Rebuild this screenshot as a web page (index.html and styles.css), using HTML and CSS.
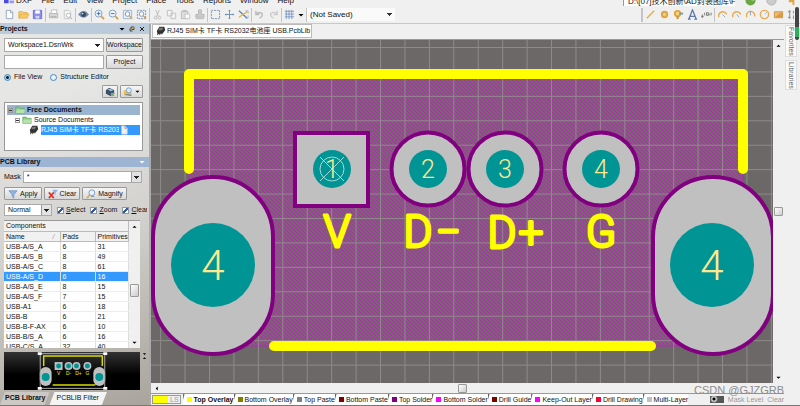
FILE: index.html
```html
<!DOCTYPE html>
<html lang="en">
<head>
	<meta charset="utf-8">
	<meta name="viewport" content="width=device-width">
	<title>USB.PcbLib</title>
	<link rel="stylesheet" href="styles.css">
</head>
<body>
	<svg class="sprite" aria-hidden="true">
		<symbol id="i-logo" viewBox="0 0 12 12"><path d="M0 0h5v9H0z" fill="#4a4ae0"/><path d="M6 6h5v3H6z" fill="#9a9af0"/></symbol>
		<symbol id="i-new" viewBox="0 0 12 12"><path d="M2.500 1.500h5l2 2v7h-7z" fill="#fff" stroke="#8fa5bd"/><path d="M7 1.500v2.500h2.500" fill="none" stroke="#8fa5bd"/></symbol>
		<symbol id="i-open" viewBox="0 0 12 12"><path d="M1 10V3h4l1 1h4v2" fill="#f5d58a" stroke="#d9a441"/><path d="M1 10l2-4.500h9L10 10z" fill="#f8c766" stroke="#e0a030" stroke-width=".6"/></symbol>
		<symbol id="i-save" viewBox="0 0 12 12"><path d="M1.500 1.500h9v9h-9z" fill="#8f8fe8" stroke="#6a6acb"/><path d="M3.500 1.500h5v3.500h-5z" fill="#fff"/><path d="M4 7.500h4v3H4z" fill="#d5d5fa"/></symbol>
		<symbol id="i-print" viewBox="0 0 12 12"><path d="M3 5l1-4h6L9 5" fill="#fff" stroke="#bbb"/><path d="M1.500 5h9v4.500h-9z" fill="#ddd" stroke="#b0b0b0"/><path d="M3 8h6" stroke="#aaa"/></symbol>
		<symbol id="i-preview" viewBox="0 0 12 12"><path d="M2.500 1.500h5l2 2v7h-7z" fill="#f6f6f6" stroke="#c5c5c5"/><circle cx="7" cy="7" r="2.300" fill="#fff" stroke="#b5b5b5"/><path d="M9 9l2 2" stroke="#b5b5b5"/></symbol>
		<symbol id="i-board" viewBox="0 0 12 12"><path d="M0 6q6-8 12 0q-6 7-12 0z" fill="#7189a4"/><circle cx="6" cy="6" r="2.600" fill="#34475e"/><circle cx="5" cy="5" r="1" fill="#c9d9ea"/></symbol>
		<symbol id="i-zoomin" viewBox="0 0 12 12"><circle cx="5" cy="5" r="3.800" fill="#eef5fc" stroke="#7d9cc0"/><path d="M8 8l3 3" stroke="#dc9a35" stroke-width="1.800"/><path d="M3 5h4M5 3v4" stroke="#3c6ba5"/></symbol>
		<symbol id="i-zoomout" viewBox="0 0 12 12"><circle cx="5" cy="5" r="3.800" fill="#eef5fc" stroke="#7d9cc0"/><path d="M8 8l3 3" stroke="#dc9a35" stroke-width="1.800"/><path d="M3 5h4" stroke="#3c6ba5"/></symbol>
		<symbol id="i-zoomdoc" viewBox="0 0 12 12"><path d="M1.500 1.500h9v9h-9z" fill="#e8f1fa" stroke="#9fb4ca"/><circle cx="6" cy="5.500" r="2.500" fill="#fff" stroke="#7094ba"/><path d="M8 7.500l3 3" stroke="#dc9a35" stroke-width="1.500"/></symbol>
		<symbol id="i-zoomsel" viewBox="0 0 12 12"><path d="M1.500 1.500h9v9h-9z" fill="none" stroke="#7590ad" stroke-dasharray="2 1"/><circle cx="6" cy="5.500" r="2.500" fill="#fff" stroke="#7094ba"/><path d="M8 7.500l3 3" stroke="#dc9a35" stroke-width="1.500"/></symbol>
		<symbol id="i-cut" viewBox="0 0 12 12"><path d="M4 1l3 7M8 1L5 8" stroke="#bbb" fill="none"/><circle cx="4" cy="9.500" r="1.500" fill="none" stroke="#bbb"/><circle cx="8" cy="9.500" r="1.500" fill="none" stroke="#bbb"/></symbol>
		<symbol id="i-copy" viewBox="0 0 12 12"><path d="M1.500 1.500h5v6h-5zM5.500 4.500h5v6h-5z" fill="#f2f2f2" stroke="#c0c0c0"/></symbol>
		<symbol id="i-paste" viewBox="0 0 12 12"><path d="M1.500 2.500h7v8h-7z" fill="#ddd" stroke="#bbb"/><path d="M3 1h4v2H3z" fill="#bbb"/><path d="M5.500 5.500h5v5h-5z" fill="#fafafa" stroke="#c5c5c5"/></symbol>
		<symbol id="i-stamp" viewBox="0 0 12 12"><path d="M5 1h3v5h3v3H2V6h3zM2 10.500h9" fill="#ccc" stroke="#b5b5b5"/></symbol>
		<symbol id="i-select" viewBox="0 0 12 12"><path d="M1.500 1.500h9v9h-9z" fill="none" stroke="#6f8db0" stroke-dasharray="2 1"/></symbol>
		<symbol id="i-move" viewBox="0 0 12 12"><path d="M6 1v10M1 6h10M5 2h2M5 10h2M2 5v2M10 5v2" stroke="#6f8db0" fill="none"/></symbol>
		<symbol id="i-cross" viewBox="0 0 12 12"><path d="M1 2l9 8" stroke="#5d85bd" stroke-width="1.500"/><path d="M1 9l9-6" stroke="#e0b24e" stroke-width="1.500"/><path d="M8 2h3v3M8 10h3V7" stroke="#9fb4ca" fill="none"/></symbol>
		<symbol id="i-undo" viewBox="0 0 12 12"><path d="M2 2v4h4M2 6q3-4 7-1q1 3-3 5" fill="none" stroke="#bbb" stroke-width="1.500"/></symbol>
		<symbol id="i-redo" viewBox="0 0 12 12"><path d="M10 2v4H6M10 6Q7 2 3 5q-1 3 3 5" fill="none" stroke="#ccc" stroke-width="1.500"/></symbol>
		<symbol id="i-grid" viewBox="0 0 12 12"><path d="M2.500 1v10M5.500 1v10M8.500 1v10M1 2.500h10M1 5.500h10M1 8.500h10" stroke="#7c99c4" fill="none"/></symbol>
		<symbol id="i-line" viewBox="0 0 12 12"><path d="M2 10l8-8" stroke="#e6ac4a" stroke-width="1.500"/></symbol>
		<symbol id="i-pad" viewBox="0 0 12 12"><circle cx="6" cy="6" r="3" fill="#d9d1a0" stroke="#e3a336" stroke-width="2"/></symbol>
		<symbol id="i-via" viewBox="0 0 12 12"><circle cx="5" cy="5" r="3" fill="#f0d48a" stroke="#e3a336" stroke-width="2"/><path d="M5 8v3" stroke="#c98d2d" stroke-width="2"/><path d="M7 5h4" stroke="#5f9cc8" stroke-width="2"/></symbol>
		<symbol id="i-text" viewBox="0 0 12 12"><path d="M2 11L6 1l4 10M3.500 8h5M1 11h3M8 11h3" stroke="#5f79a8" stroke-width="1.400" fill="none"/></symbol>
		<symbol id="i-coord" viewBox="0 0 12 12"><path d="M0 8h3M1.500 6v4M4 7V4M6 4h2v3H6zM9 7V5M11 4v3" stroke="#777" fill="none"/></symbol>
		<symbol id="i-arc1" viewBox="0 0 12 12"><path d="M2 9A4.500 4.500 0 1 1 10.500 6" stroke="#eaa94a" stroke-width="1.500" fill="none"/><path d="M6 6l3 3" stroke="#8fa5bd"/></symbol>
		<symbol id="i-arc2" viewBox="0 0 12 12"><path d="M2 9A4.500 4.500 0 1 1 10.500 8" stroke="#eaa94a" stroke-width="1.500" fill="none"/><path d="M6 2v5" stroke="#8fa5bd"/></symbol>
		<symbol id="i-ring" viewBox="0 0 12 12"><circle cx="6" cy="6" r="4.500" stroke="#eaa94a" stroke-width="1.500" fill="none"/><path d="M6 6l3-3" stroke="#b0bccb"/></symbol>
		<symbol id="i-fill" viewBox="0 0 12 12"><path d="M1.500 3h9v6.500h-9z" fill="#f0bc68" stroke="#c9924a"/><path d="M2 9l8-6v6z" fill="#dc9a45"/></symbol>
		<symbol id="i-dims" viewBox="0 0 12 12"><path d="M3 1v10M1 3h3M1 9h3M7 2v3M7 7v4M9 3h2M9 9h2" stroke="#888" fill="none"/></symbol>
		<symbol id="i-go" viewBox="0 0 12 12"><circle cx="6" cy="6" r="5.500" fill="#6da544"/><path d="M3 5h4v-2l3 3" fill="#fff"/></symbol>
		<symbol id="i-stop" viewBox="0 0 12 12"><circle cx="6" cy="6" r="5" fill="#ccc" stroke="#b0b0b0"/></symbol>
		<symbol id="i-home" viewBox="0 0 12 12"><path d="M2 2h6v9H6V8H2z" fill="#e2a63c"/></symbol>
		<symbol id="i-chip" viewBox="0 0 12 12"><path d="M1 6l3-5h6l1 4-3 4-6 1z" fill="#333"/><path d="M4 2h5l-2 3H3z" fill="#777"/><path d="M2 9v2M4.500 9v2M7 8v2" stroke="#333"/></symbol>
		<symbol id="i-folder" viewBox="0 0 12 12"><path d="M1 10V2.500h4l1 1.500h5v6z" fill="#8ccf86" stroke="#5b9f5c" stroke-width=".8"/><path d="M1 10l1-4.500h10L11 10z" fill="#b4e3ab"/></symbol>
		<symbol id="i-page" viewBox="0 0 12 12"><path d="M3 1h4l3 3v7H3z" fill="#eee" stroke="#c3c3c3" stroke-width=".6"/><path d="M7 1v3h3" fill="none" stroke="#999"/></symbol>
		<symbol id="i-refresh" viewBox="0 0 12 12"><path d="M1 4l4-3 6 3v4l-4 3-6-3z" fill="#3b4f68"/><path d="M3 3l4 2 3-1-4-2z" fill="#9ec9de"/><path d="M7 7h4v4H7z" fill="#6fb07c"/></symbol>
		<symbol id="i-view" viewBox="0 0 12 12"><path d="M1 4h9v6H1z" fill="#f0bb49"/><circle cx="7" cy="4" r="3" fill="#dcebfa" stroke="#6b9bd1"/><path d="M3 9l7 1" stroke="#4d7fc4" stroke-width="1.500"/></symbol>
		<symbol id="i-funnel" viewBox="0 0 12 12"><path d="M1 2h10L7 7v4L5 9V7z" fill="#8eb6e2" stroke="#5f87b8" stroke-width=".7"/></symbol>
		<symbol id="i-clear" viewBox="0 0 12 12"><path d="M5 1h7L9 5v3L8 7V5z" fill="#8eb6e2"/><path d="M1 4l6 7M7 4l-6 7" stroke="#e0352b" stroke-width="2"/></symbol>
		<symbol id="i-magnify" viewBox="0 0 12 12"><circle cx="7" cy="4.500" r="3.500" fill="#eaf3fc" stroke="#6b8fba"/><path d="M4.500 7L1 11" stroke="#d8b23a" stroke-width="2"/><path d="M6 9h4" stroke="#7d93ad"/></symbol>
		<symbol id="i-pin" viewBox="0 0 12 12"><path d="M4 2h6v5H4zM2 5v5h5" fill="none" stroke="#222" stroke-width="1.500"/><path d="M5 7l4-4" stroke="#e4c43c" stroke-width="2"/></symbol>
		<symbol id="i-close" viewBox="0 0 12 12"><path d="M2 2l8 8M10 2l-8 8" stroke="#222" stroke-width="2"/></symbol>
		<symbol id="i-down" viewBox="0 0 12 12"><path d="M1 4h10L6 9z"/></symbol>
		<symbol id="i-up" viewBox="0 0 12 12"><path d="M1 9h10L6 4z"/></symbol>
		<symbol id="i-left" viewBox="0 0 12 12"><path d="M9 1v10L4 6z"/></symbol>
	</svg>

	<nav class="menubar">
		<svg class="icon"><use href="#i-logo"/></svg>
		<a href="#">DXP</a>
		<a href="#">File</a>
		<a href="#">Edit</a>
		<a href="#">View</a>
		<a href="#">Project</a>
		<a href="#">Place</a>
		<a href="#">Tools</a>
		<a href="#">Reports</a>
		<a href="#">Window</a>
		<a href="#">Help</a>
		<input class="address" aria-label="Address" value="D:\[07]技术创新\AD封装图库\FPC">
		<svg class="icon"><use href="#i-go"/></svg>
		<svg class="icon"><use href="#i-stop"/></svg>
		<svg class="icon"><use href="#i-home"/></svg>
	</nav>

	<div class="toolbar">
		<div class="tools">
			<button aria-label="New"><svg class="icon"><use href="#i-new"/></svg></button>
			<button aria-label="Open"><svg class="icon"><use href="#i-open"/></svg></button>
			<button aria-label="Save"><svg class="icon"><use href="#i-save"/></svg></button>
		</div>
		<div class="tools">
			<button aria-label="Print"><svg class="icon"><use href="#i-print"/></svg></button>
			<button aria-label="Preview"><svg class="icon"><use href="#i-preview"/></svg></button>
		</div>
		<div class="tools">
			<button aria-label="Devices"><svg class="icon"><use href="#i-board"/></svg></button>
		</div>
		<div class="tools">
			<button aria-label="Zoom in"><svg class="icon"><use href="#i-zoomin"/></svg></button>
			<button aria-label="Zoom out"><svg class="icon"><use href="#i-zoomout"/></svg></button>
			<button aria-label="Fit document"><svg class="icon"><use href="#i-zoomdoc"/></svg></button>
			<button aria-label="Fit area"><svg class="icon"><use href="#i-zoomsel"/></svg></button>
		</div>
		<div class="tools">
			<button aria-label="Cut"><svg class="icon"><use href="#i-cut"/></svg></button>
			<button aria-label="Copy"><svg class="icon"><use href="#i-copy"/></svg></button>
			<button aria-label="Paste"><svg class="icon"><use href="#i-paste"/></svg></button>
			<button aria-label="Rubber stamp"><svg class="icon"><use href="#i-stamp"/></svg></button>
		</div>
		<div class="tools">
			<button aria-label="Select"><svg class="icon"><use href="#i-select"/></svg></button>
			<button aria-label="Move"><svg class="icon"><use href="#i-move"/></svg></button>
			<button aria-label="Deselect"><svg class="icon"><use href="#i-cross"/></svg></button>
		</div>
		<div class="tools">
			<button aria-label="Undo"><svg class="icon"><use href="#i-undo"/></svg></button>
			<button aria-label="Redo"><svg class="icon"><use href="#i-redo"/></svg></button>
		</div>
		<div class="tools">
			<button aria-label="Grid"><svg class="icon"><use href="#i-grid"/></svg></button>
			<button aria-label="Grid menu"><svg class="icon tiny"><use href="#i-down"/></svg></button>
		</div>
		<select class="filter" aria-label="Filter"><option>(Not Saved)</option></select>
		<div class="tools place">
			<button aria-label="Line"><svg class="icon"><use href="#i-line"/></svg></button>
			<button aria-label="Pad"><svg class="icon"><use href="#i-pad"/></svg></button>
			<button aria-label="Via"><svg class="icon"><use href="#i-via"/></svg></button>
			<button aria-label="String"><svg class="icon"><use href="#i-text"/></svg></button>
			<button aria-label="Coordinate"><svg class="icon"><use href="#i-coord"/></svg></button>
		</div>
		<div class="tools arcs">
			<button aria-label="Arc center"><svg class="icon"><use href="#i-arc1"/></svg></button>
			<button aria-label="Arc edge"><svg class="icon"><use href="#i-arc1"/></svg></button>
			<button aria-label="Arc any angle"><svg class="icon"><use href="#i-arc2"/></svg></button>
			<button aria-label="Full circle"><svg class="icon"><use href="#i-ring"/></svg></button>
			<button aria-label="Fill"><svg class="icon"><use href="#i-fill"/></svg></button>
			<button aria-label="Array"><svg class="icon"><use href="#i-dims"/></svg></button>
		</div>
	</div>

	<div class="workbench">
		<aside class="side">
			<h2 class="head">
				<span>Projects</span>
				<svg class="icon tiny"><use href="#i-down"/></svg>
				<svg class="icon tiny"><use href="#i-pin"/></svg>
				<svg class="icon tiny"><use href="#i-close"/></svg>
			</h2>
			<div class="projects">
				<div class="row">
					<select class="grow field" aria-label="Workspace"><option>Workspace1.DsnWrk</option></select>
					<button class="btn wide">Workspace</button>
				</div>
				<div class="row">
					<input class="grow field" aria-label="Project name">
					<button class="btn wide">Project</button>
				</div>
				<div class="row radios">
					<label><input type="radio" name="mode" checked>File View</label>
					<label><input type="radio" name="mode">Structure Editor</label>
				</div>
				<div class="row right">
					<button class="btn" aria-label="Refresh"><svg class="icon"><use href="#i-refresh"/></svg></button>
					<button class="btn" aria-label="Options"><svg class="icon"><use href="#i-view"/></svg><svg class="icon tiny"><use href="#i-down"/></svg></button>
				</div>
				<ul class="tree">
					<li class="group"><span class="box"></span><svg class="icon"><use href="#i-folder"/></svg>Free Documents</li>
					<li class="sub"><span class="box"></span><svg class="icon"><use href="#i-folder"/></svg>Source Documents</li>
					<li class="doc"><svg class="icon"><use href="#i-chip"/></svg><span class="name">RJ45 SIM卡 TF卡 RS2032电池座</span><span class="mark"><svg class="icon"><use href="#i-page"/></svg></span></li>
				</ul>
			</div>

			<h2 class="head lib">
				<span>PCB Library</span>
				<svg class="icon"><use href="#i-down"/></svg>
			</h2>
			<div class="library">
				<div class="row mask">
					<label for="mask">Mask</label>
					<select id="mask" class="grow field boxed"><option>*</option></select>
				</div>
				<div class="row">
					<button class="btn"><svg class="icon"><use href="#i-funnel"/></svg>Apply</button>
					<button class="btn"><svg class="icon"><use href="#i-clear"/></svg>Clear</button>
					<button class="btn"><svg class="icon"><use href="#i-magnify"/></svg>Magnify</button>
				</div>
				<div class="row checks">
					<select class="field boxed" aria-label="Mode"><option>Normal</option></select>
					<label><input type="checkbox" checked><span><u>S</u>elect</span></label>
					<label><input type="checkbox" checked><span><u>Z</u>oom</span></label>
					<label><input type="checkbox" checked><span><u>C</u>lear Existing</span></label>
				</div>
				<div class="list">
					<table>
						<colgroup><col class="c-name"><col class="c-pads"><col></colgroup>
						<thead>
							<tr><th colspan="3">Components</th></tr>
							<tr><th class="sorted">Name<i>/</i></th><th>Pads</th><th>Primitives</th></tr>
						</thead>
						<tbody>
							<tr><td>USB-A/S_A</td><td>6</td><td>31</td></tr>
							<tr><td>USB-A/S_B</td><td>8</td><td>49</td></tr>
							<tr><td>USB-A/S_C</td><td>8</td><td>61</td></tr>
							<tr class="on"><td>USB-A/S_D</td><td>6</td><td>16</td></tr>
							<tr><td>USB-A/S_E</td><td>8</td><td>15</td></tr>
							<tr><td>USB-A/S_F</td><td>7</td><td>15</td></tr>
							<tr><td>USB-A1</td><td>6</td><td>18</td></tr>
							<tr><td>USB-B</td><td>6</td><td>21</td></tr>
							<tr><td>USB-B-F-AX</td><td>6</td><td>10</td></tr>
							<tr><td>USB-B/S_A</td><td>6</td><td>16</td></tr>
							<tr><td>USB-C/S_A</td><td>32</td><td>40</td></tr>
						</tbody>
					</table>
					<div class="vbar"><svg class="icon tiny"><use href="#i-up"/></svg><span class="thumb"></span><svg class="icon tiny"><use href="#i-down"/></svg></div>
				</div>
				<div class="mini">
					<svg viewBox="0 0 137 38">
						<path d="M40 14V4h59v10M49 33h43" fill="none" stroke="#d8d800" stroke-width="1.500"/>
						<rect x="36" y="15" width="12" height="19" rx="6" fill="#c0c0c0"/>
						<rect x="90" y="15" width="12" height="19" rx="6" fill="#c0c0c0"/>
						<circle cx="42" cy="25" r="4" fill="#009494"/>
						<circle cx="96" cy="25" r="4" fill="#009494"/>
						<path d="M51 10h8v8h-8z" fill="#c0c0c0"/>
						<circle cx="65" cy="14" r="4" fill="#c0c0c0"/>
						<circle cx="73" cy="14" r="4" fill="#c0c0c0"/>
						<circle cx="84" cy="14" r="4" fill="#c0c0c0"/>
						<g fill="#009494"><circle cx="55" cy="14" r="2.500"/><circle cx="65" cy="14" r="2.500"/><circle cx="73" cy="14" r="2.500"/><circle cx="84" cy="14" r="2.500"/></g>
						<g class="mini-text"><text x="55" y="23">V</text><text x="65" y="23">D-</text><text x="75" y="23">D+</text><text x="84" y="23">G</text></g>
						<path d="M36.500 1.500h65v35h-65z" fill="none" stroke="#aaa"/>
						<path d="M34 0h4v3h-4zM100 0h4v3h-4zM34 35h4v3h-4zM100 35h4v3h-4z" fill="#fff"/>
					</svg>
					<span class="fold"><svg class="icon"><use href="#i-down"/></svg><svg class="icon"><use href="#i-up"/></svg></span>
				</div>
			</div>
			<div class="paneltabs">
				<a href="#" class="on">PCB Library</a>
				<a href="#">PCBLIB Filter</a>
			</div>
		</aside>

		<main class="editor">
			<div class="doctabs">
				<a href="#"><svg class="icon"><use href="#i-chip"/></svg>RJ45 SIM卡 TF卡 RS2032电池座 USB.PcbLib</a>
			</div>
			<div class="view">
				<svg class="board" viewBox="151 40 622 343" preserveAspectRatio="xMidYMid slice">
					<defs>
						<pattern id="grid" x="209" y="47" width="24.430" height="24.430" patternUnits="userSpaceOnUse">
							<path d="M.5 0v24.430M0 .5h24.430" stroke="#979394" stroke-width="1"/>
						</pattern>
						<pattern id="hatch" width="4" height="4" patternUnits="userSpaceOnUse">
							<path d="M-1-1l6 6M-1 3l2 2M3-1l2 2" stroke="#b030b0"/>
							<path d="M1-1l4 4M-1 1l4 4" stroke="#6c7560" stroke-width=".8"/>
						</pattern>
					</defs>
					<rect x="151" y="40" width="622" height="343" fill="#6b6867"/>
					<rect x="189" y="73" width="554" height="273" fill="url(#hatch)" stroke="#b02cb0"/>
					<rect x="151" y="40" width="622" height="343" fill="url(#grid)" opacity=".8"/>
					<g fill="none" stroke="#ff0" stroke-width="10" stroke-linecap="round" stroke-linejoin="round">
						<path d="M189 169V74h554v95"/>
						<path d="M274 346h377"/>
					</g>
					<g fill="#c0c0c0" stroke="#800080" stroke-width="4">
						<rect x="153" y="177" width="120" height="177" rx="60"/>
						<rect x="653" y="177" width="120" height="177" rx="60"/>
						<rect x="295" y="133" width="73" height="73"/>
						<circle cx="428" cy="169" r="36.500"/>
						<circle cx="505" cy="169" r="36.500"/>
						<circle cx="601" cy="169" r="36.500"/>
					</g>
					<g fill="#009494">
						<circle cx="213" cy="265" r="42"/>
						<circle cx="712" cy="265" r="42"/>
						<circle cx="332" cy="169" r="19"/>
						<circle cx="428" cy="169" r="19"/>
						<circle cx="505" cy="169" r="19"/>
						<circle cx="601" cy="169" r="19"/>
					</g>
					<g class="pin">
						<text x="332" y="178">1</text>
						<text x="428" y="178">2</text>
						<text x="505" y="178">3</text>
						<text x="601" y="178">4</text>
					</g>
					<g class="pin big">
						<text x="213" y="280">4</text>
						<text x="712" y="280">4</text>
					</g>
					<g fill="none" stroke="#cfe6e6" stroke-width=".8">
						<circle cx="332" cy="169" r="12"/>
						<path d="M320 157l24 24M344 157l-24 24"/>
					</g>
					<g class="silk">
						<text x="337" y="247">V</text>
						<text x="418 448" y="247">D−</text>
						<text x="502 531" y="248">D+</text>
						<text x="601" y="247">G</text>
					</g>
				</svg>
				<div class="vbar"><svg class="icon tiny"><use href="#i-up"/></svg><span class="thumb"></span><svg class="icon tiny"><use href="#i-down"/></svg></div>
			</div>
			<div class="hbar"><svg class="icon tiny"><use href="#i-left"/></svg><span class="thumb"></span></div>
			<div class="layers">
				<button class="ls"><i></i>LS</button>
				<a href="#" class="on"><i class="c-yellow"></i>Top Overlay</a>
				<a href="#"><i class="c-olive"></i>Bottom Overlay</a>
				<a href="#"><i class="c-gray"></i>Top Paste</a>
				<a href="#"><i class="c-maroon"></i>Bottom Paste</a>
				<a href="#"><i class="c-purple"></i>Top Solder</a>
				<a href="#"><i class="c-magenta"></i>Bottom Solder</a>
				<a href="#"><i class="c-maroon"></i>Drill Guide</a>
				<a href="#"><i class="c-magenta"></i>Keep-Out Layer</a>
				<a href="#"><i class="c-red"></i>Drill Drawing</a>
				<a href="#"><i class="c-silver"></i>Multi-Layer</a>
				<div class="masks">
					<span class="snap"></span>
					<button>Mask Level</button>
					<button>Clear</button>
				</div>
			</div>
			<div class="watermark">CSDN @GJZGRB</div>
		</main>

		<aside class="rail">
			<a href="#">Favorites</a>
			<a href="#">Libraries</a>
		</aside>
	</div>
	<div class="meter"></div>
</body>
</html>
```
FILE: styles.css
```css
* {
	box-sizing: border-box;
}

html, body {
	margin: 0;
	padding: 0;
}

body {
	display: flex;
	flex-direction: column;
	height: 100vh;
	overflow: hidden;
	position: relative;
	background-color: #f0f0f0;
	border-bottom: 1px solid #777;
	font-family: "Liberation Sans", "Noto Sans CJK SC", sans-serif;
	font-size: 7px;
	line-height: 10px;
	color: #111;
	white-space: nowrap;
}

a {
	color: inherit;
	text-decoration: none;
}

button, input, select {
	font: inherit;
	color: inherit;
	margin: 0;
	padding: 0;
	border: 0;
	border-radius: 0;
	background: none;
	min-width: 0;
}

select {
	appearance: none;
}

.sprite {
	display: none;
}

.icon {
	width: 10px;
	height: 10px;
	flex: none;
	display: block;
}

.tiny {
	width: 5px;
	height: 5px;
}

/* menu and toolbar */

.menubar {
	display: flex;
	align-items: flex-end;
	gap: 10px;
	height: 6px;
	flex: none;
	overflow: hidden;
	padding-left: 4px;
	font-size: 8px;
}

.menubar a {
	margin-right: -1px;
}

.menubar .icon {
	width: 11px;
	height: 11px;
}

.menubar > .icon:first-child {
	margin-right: -9px;
}

.menubar > .icon:last-child {
	margin-right: 2px;
}

.address {
	margin-left: auto;
	width: 112px;
	height: 12px;
	padding-left: 4px;
	background-color: #fff;
	border-left: 1px solid #999;
}

.toolbar {
	display: flex;
	align-items: center;
	height: 18px;
	flex: none;
	padding-left: 2px;
	border-bottom: 1px solid #c8c8c8;
}

.toolbar .icon {
	width: 11px;
	height: 11px;
}

.toolbar .tiny {
	width: 6px;
	height: 6px;
}

.tools {
	display: flex;
	align-items: center;
	gap: 3px;
	height: 14px;
	padding: 0 2px;
	border-right: 1px solid #c4c4c4;
}

.filter {
	width: 88px;
	height: 13px;
	padding-left: 3px;
	font-size: 8px;
	background: linear-gradient(#333, #333) right 5px top 7px / 1px 1px no-repeat, linear-gradient(#333, #333) right 4px top 6px / 3px 1px no-repeat, linear-gradient(#333, #333) right 3px top 5px / 5px 1px no-repeat, #fafafa;
}

.place {
	margin-left: auto;
	border-left: 2px solid #c4c4c4;
}

.arcs {
	border: 0;
}

.workbench {
	display: flex;
	flex: 1;
	min-height: 0;
}

/* left panels */

.side {
	width: 151px;
	flex: none;
	display: flex;
	flex-direction: column;
	overflow: hidden;
	border-right: 2px solid #aaa;
	background: linear-gradient(160deg, #e6e6e5 20%, #d3d2cf 55%, #a9a49c);
}

.head {
	display: flex;
	align-items: center;
	gap: 4px;
	margin: 0;
	height: 10px;
	flex: none;
	padding-right: 4px;
	background-color: #bccbdb;
	font-size: 7px;
	font-weight: bold;
}

.head .icon {
	width: 6px;
	height: 6px;
}

.head span {
	flex: 1;
}

.lib {
	background-color: #9db5d2;
}

.lib .icon {
	fill: #fff;
}

.projects {
	display: flex;
	flex-direction: column;
	gap: 3px;
	padding: 4px 6px 6px 4px;
}

.row {
	display: flex;
	align-items: center;
	gap: 2px;
}

.grow {
	flex: 1;
}

.field {
	height: 14px;
	padding-left: 3px;
	border: 1px solid #aaa;
	background-color: #fff;
}

select.field {
	background: linear-gradient(#222, #222) right 5px top 7px / 1px 1px no-repeat, linear-gradient(#222, #222) right 4px top 6px / 3px 1px no-repeat, linear-gradient(#222, #222) right 3px top 5px / 5px 1px no-repeat, #fff;
}

select.boxed {
	height: 12px;
	background: linear-gradient(#222, #222) right 4px top 6px / 1px 1px no-repeat, linear-gradient(#222, #222) right 3px top 5px / 3px 1px no-repeat, linear-gradient(#222, #222) right 2px top 4px / 5px 1px no-repeat, linear-gradient(90deg, #999 1px, #e2e2e2 1px) right / 10px 100% no-repeat, #fff;
}

.btn {
	display: flex;
	align-items: center;
	justify-content: center;
	gap: 2px;
	height: 13px;
	padding: 0 2px;
	border: 1px solid #999;
	border-radius: 1px;
	background: linear-gradient(#f6f6f6, #d8d8d8);
}

.wide {
	width: 37px;
	height: 14px;
}

.radios {
	gap: 8px;
}

label {
	display: flex;
	align-items: center;
	gap: 3px;
}

[type=radio] {
	appearance: none;
	width: 7px;
	height: 7px;
	border: 1px solid #4a86b5;
	border-radius: 50%;
	background-color: #e4f3fc;
}

[type=radio]:checked {
	background: radial-gradient(#123 30%, #a9d3ee 50%);
}

[type=checkbox] {
	appearance: none;
	width: 7px;
	height: 7px;
	border: 1px solid #8b98a8;
	background-color: #fff;
}

[type=checkbox]:checked {
	background: linear-gradient(135deg, #fff 35%, #3558a0 35%, #3558a0 65%, #fff 65%);
}

.right {
	justify-content: flex-end;
}

.tree {
	margin: 1px 0 0;
	padding: 2px;
	height: 49px;
	list-style: none;
	border: 1px solid #999;
	background-color: #fff;
}

.tree li {
	display: flex;
	align-items: center;
	gap: 2px;
	height: 10px;
}

.tree .group {
	padding-left: 1px;
	background-color: #9bb4d0;
	font-weight: bold;
}

.tree .sub {
	padding-left: 8px;
}

.tree .doc {
	padding-left: 22px;
}

.tree .name {
	flex: 1;
	overflow: hidden;
	background-color: #3399ff;
	color: #fff;
}

.tree .mark {
	background-color: #3399ff;
	margin-left: -2px;
	padding-right: 11px;
}

.box {
	width: 5px;
	height: 5px;
	border: 1px solid #999;
	background: linear-gradient(#333, #333) center / 3px 1px no-repeat;
}

.library {
	display: flex;
	flex-direction: column;
	flex: 1;
	gap: 4px;
	min-height: 0;
	padding: 4px 2px 2px 4px;
}

.library .btn {
	padding: 0 3px;
}

.mask {
	padding-right: 5px;
}

.checks {
	gap: 5px;
	overflow: hidden;
}

.checks select {
	width: 48px;
	flex: none;
}

.checks label {
	flex: none;
	gap: 2px;
}

.list {
	display: flex;
	flex: 1;
	min-height: 0;
	overflow: hidden;
	margin-right: 7px;
	border-top: 1px solid #999;
	background-color: #fff;
}

table {
	flex: 1;
	width: 100%;
	align-self: flex-start;
	table-layout: fixed;
	border-collapse: collapse;
}

th, td {
	height: 10px;
	padding: 0 0 0 2px;
	line-height: 9px;
	font-weight: normal;
	text-align: left;
	border-right: 1px solid #ddd;
	border-bottom: 1px solid #ececec;
}

th {
	background-color: #f1f1f1;
	border-color: #bbb;
}

.c-name {
	width: 56px;
}

.c-pads {
	width: 35px;
}

.sorted i {
	float: right;
	margin-right: 5px;
	color: #999;
}

.on td {
	background-color: #3399ff;
	color: #fff;
}

.vbar {
	display: flex;
	flex-direction: column;
	align-items: center;
	justify-content: space-between;
	width: 11px;
	flex: none;
	padding: 3px 0;
	background-color: #f0f0f0;
}

.thumb {
	width: 9px;
	height: 9px;
	border: 1px solid #999;
	border-radius: 1px;
	background: linear-gradient(135deg, #fff, #ccc);
}

.list .thumb {
	height: 13px;
	margin-top: 12px;
}

.mini {
	display: flex;
	align-items: flex-start;
	gap: 2px;
	height: 38px;
	flex: none;
}

.mini > svg {
	width: 137px;
	height: 38px;
	background: linear-gradient(#333, #000 60%);
}

.mini-text {
	fill: #ee0;
	font: 5px "Liberation Sans", sans-serif;
	text-anchor: middle;
}

.fold .icon {
	width: 5px;
	height: 4px;
}

.paneltabs {
	display: flex;
	height: 13px;
	flex: none;
}

.paneltabs a {
	padding: 1px 8px 0 7px;
	background-color: #f4f4f4;
	clip-path: polygon(5px 0, 100% 0, calc(100% - 5px) 100%, 0 100%);
}

.paneltabs .on {
	padding-left: 5px;
	padding-right: 4px;
	background-color: #ccc9c4;
	font-weight: bold;
}

/* document area */

.editor {
	position: relative;
	display: flex;
	flex-direction: column;
	flex: 1;
	min-width: 0;
}

.doctabs {
	display: flex;
	align-items: flex-end;
	height: 16px;
	flex: none;
	padding-left: 1px;
	border-bottom: 1px solid #999;
}

.doctabs a {
	display: flex;
	align-items: center;
	gap: 1px;
	height: 14px;
	margin-bottom: 1px;
	padding: 0 1px 0 3px;
	border: 1px solid #bbb;
	background-color: #fff;
}

.view {
	display: flex;
	flex: 1;
	min-height: 0;
}

.board {
	flex: 1;
	min-width: 0;
	height: 100%;
}

.pin {
	fill: #ffe98f;
	font: 300 25px Roboto, sans-serif;
	text-anchor: middle;
}

.big {
	font-size: 42px;
}

.silk {
	fill: #ff0;
	stroke: #ff0;
	stroke-width: 3px;
	stroke-linejoin: round;
	font: 300 44px Roboto, sans-serif;
	text-anchor: middle;
}

.hbar {
	display: flex;
	align-items: center;
	justify-content: space-between;
	height: 10px;
	flex: none;
	padding: 0 18px 0 3px;
	background-color: #f0f0f0;
}

.hbar .thumb {
	margin-right: auto;
	margin-left: auto;
}

.layers {
	display: flex;
	align-items: center;
	height: 12px;
	flex: none;
	padding-left: 1px;
	border-top: 1px solid #999;
}

.layers a {
	display: flex;
	align-items: center;
	gap: 2px;
	height: 11px;
	padding: 0 0 0 4px;
	background: linear-gradient(105deg, #666 1px, #fff 2px);
}

.layers .on {
	margin-left: 2px;
	font-weight: bold;
}

.layers a i {
	width: 5px;
	height: 5px;
}

.ls {
	display: flex;
	align-items: center;
	flex: none;
	gap: 2px;
	padding-right: 1px;
	height: 9px;
	border: 1px solid #999;
	color: #999;
}

.ls i {
	width: 15px;
	height: 7px;
	background-color: #ff0;
}

.c-yellow { background-color: #ff0; }
.c-olive { background-color: #808000; }
.c-gray { background-color: #808080; }
.c-maroon { background-color: #800000; }
.c-purple { background-color: #800080; }
.c-magenta { background-color: #f0f; }
.c-red { background-color: #f03; }
.c-silver { background-color: #c0c0c0; }

.masks {
	display: flex;
	align-items: center;
	gap: 4px;
	margin-left: auto;
	color: #999;
}

.snap {
	width: 14px;
	height: 7px;
	background: radial-gradient(circle at 4px 3px, #000 1px, #ddd 2px, #555 4px);
}

.watermark {
	position: absolute;
	right: 0;
	bottom: 9px;
	color: #8c8c8c;
	font-size: 11px;
	line-height: 12px;
}

.rail {
	width: 16px;
	flex: none;
	display: flex;
	flex-direction: column;
	align-items: center;
	gap: 3px;
	padding: 1px 3px 0 0;
}

.rail a {
	writing-mode: vertical-rl;
	padding: 1px 0 0;
	background-color: #fafafa;
	border: 1px solid #ddd;
	color: #666;
}

.meter {
	position: absolute;
	right: 1px;
	top: 7px;
	width: 4px;
	height: 33px;
	border-radius: 2px;
	background: linear-gradient(#444 60%, #2fae55 60%, #2fae55 90%, #444 90%);
}
```
